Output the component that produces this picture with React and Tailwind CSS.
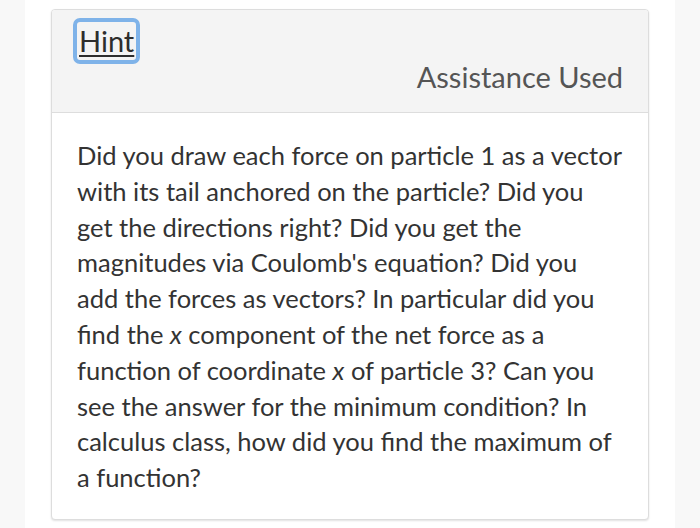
import React from 'react';

const App = () => {
  return (
    <div className="flex min-h-[528px] w-[700px] bg-white font-['Lato','Liberation_Sans',sans-serif]">
      <div className="w-[25px] shrink-0 bg-[#f8f8f8]" />
      <div className="w-[650px] shrink-0 bg-white pl-[26px] pr-[26px] pt-[9px]">
        <div className="overflow-hidden rounded-[4px] border border-[#dddddd] bg-white shadow-[0_1px_2px_rgba(0,0,0,0.12)]">
          <div className="h-[103px] border-b border-[#dddddd] bg-[#f4f4f4] px-[25px] pt-[12px]">
            <div>
              <a
                href="#hint"
                className="inline-block rounded-[3px] px-[2px] text-[29px] leading-[38px] text-[#2d2d2d] underline decoration-2 underline-offset-[3px] outline outline-4 outline-[#7fb3e9]"
              >
                Hint
              </a>
            </div>
            <div className="text-right text-[29px] leading-[34px] text-[#555555]">
              Assistance Used
            </div>
          </div>
          <div className="px-[25px] pb-[23px] pt-[25px] text-[25.5px] leading-[35.8px] text-[#333333]">
            Did you draw each force on particle 1 as a vector with its tail anchored on the particle? Did you get the
            directions right? Did you get the magnitudes via Coulomb's equation? Did you add the forces as vectors? In
            particular did you find the <i>x</i> component of the net force as a function of coordinate <i>x</i> of
            particle 3? Can you see the answer for the minimum condition? In calculus class, how did you find the
            maximum of a function?
          </div>
        </div>
      </div>
      <div className="flex-1 bg-[#f8f8f8]" />
    </div>
  );
};

export default App;
